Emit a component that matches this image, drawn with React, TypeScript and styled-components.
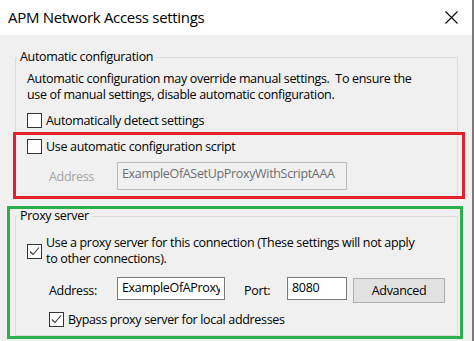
import React from 'react';
import styled, { createGlobalStyle } from 'styled-components';

const GlobalStyle = createGlobalStyle`
  html, body {
    margin: 0;
    padding: 0;
    background: #ffffff;
  }
  body {
    font-family: "Open Sans", "Noto Sans", Arial, sans-serif;
  }
`;

const Window = styled.div`
  width: 474px;
  height: 341px;
  box-sizing: border-box;
  border-right: 2px solid #7a7a7a;
  background: #f0f0f0;
  overflow: hidden;
  display: flex;
  flex-direction: column;
  font-size: 12.5px;
  letter-spacing: -0.33px;
  color: #000;
`;

const TitleBar = styled.div`
  height: 35px;
  flex: none;
  background: #ffffff;
  display: flex;
  align-items: center;
  justify-content: space-between;
  padding: 0 14px 0 8px;
`;

const Title = styled.span`
  font-size: 15px;
  letter-spacing: -0.3px;
  line-height: 20px;
  margin-top: -1px;
`;

const Body = styled.div`
  flex: 1;
  display: flex;
  flex-direction: column;
  padding-top: 14px;
`;

const Group = styled.fieldset<{ $padBottom?: number }>`
  margin: 0;
  padding: 0 0 ${p => p.$padBottom ?? 0}px 0;
  border: 1px solid #dcdcdc;
  min-width: 0;
`;

const AutoGroup = styled(Group)`
  margin: 0 14px 0 15px;
`;

const Legend = styled.legend<{ $lh: number }>`
  margin-left: 1px;
  padding: 0 3px;
  line-height: ${p => p.$lh}px;
`;

const GroupContent = styled.div<{ $top: number }>`
  padding: ${p => p.$top}px 0 0 11px;
`;

const Lines = styled.p`
  margin: 0;
  line-height: 16px;
  white-space: nowrap;
`;

const Highlight = styled.div<{ $color: string }>`
  border: 3px solid ${p => p.$color};
`;

const RedBox = styled(Highlight)`
  margin: 3px -8px -1px -3px;
  padding: 3px 0 6px 11px;
`;

const GreenBox = styled(Highlight)`
  margin: 7px 9px 0 7px;
  padding: 0 2px 0 5px;
`;

const CheckRow = styled.div<{ $top?: number; $indent?: number }>`
  display: flex;
  align-items: center;
  gap: 4px;
  line-height: 17px;
  white-space: nowrap;
  margin-top: ${p => p.$top ?? 0}px;
  padding-left: ${p => p.$indent ?? 0}px;
`;

const BoxFrame = styled.span`
  width: 13px;
  height: 13px;
  flex: none;
  border: 1px solid #333333;
  background: #ffffff;
  display: flex;
  align-items: center;
  justify-content: center;
`;

const FieldRow = styled.div<{ $top: number; $indent: number }>`
  display: flex;
  align-items: flex-start;
  margin-top: ${p => p.$top}px;
  padding-left: ${p => p.$indent}px;
`;

const FieldLabel = styled.span<{ $w: number; $disabled?: boolean; $left?: number }>`
  width: ${p => p.$w}px;
  flex: none;
  align-self: center;
  margin-left: ${p => p.$left ?? 0}px;
  color: ${p => (p.$disabled ? '#a3a3a3' : '#000')};
`;

const TextInput = styled.input<{ $w: number; $h: number; $disabled?: boolean }>`
  box-sizing: border-box;
  width: ${p => p.$w}px;
  height: ${p => p.$h}px;
  flex: none;
  margin: 0;
  padding: 0 4px ${p => (p.$disabled ? 5 : 2)}px 4px;
  border: 1px solid ${p => (p.$disabled ? '#b9b9b9' : '#7a7a7a')};
  background: ${p => (p.$disabled ? '#f0f0f0' : '#ffffff')};
  color: ${p => (p.$disabled ? '#6d6d6d' : '#000')};
  font: inherit;
  letter-spacing: inherit;
  outline: none;
`;

const Button = styled.button`
  box-sizing: border-box;
  width: 92px;
  height: 25px;
  margin: 1px 0 0 6px;
  padding: 0;
  border: 1px solid #adadad;
  background: #e1e1e1;
  color: #000;
  font: inherit;
  letter-spacing: inherit;
`;

const Check = ({ checked }: { checked?: boolean }) => (
  <BoxFrame>
    {checked && (
      <svg width="11" height="11" viewBox="0 0 11 11">
        <polyline points="1,5.5 4,8.5 10,1.5" fill="none" stroke="#333" strokeWidth="1.1" />
      </svg>
    )}
  </BoxFrame>
);

const CloseIcon = () => (
  <svg width="13" height="13" viewBox="0 0 13 13">
    <path d="M0.5 0.5 L12.5 12.5 M12.5 0.5 L0.5 12.5" stroke="#000" strokeWidth="1.1" />
  </svg>
);

export default function App() {
  return (
    <>
      <GlobalStyle />
      <Window>
        <TitleBar>
          <Title>APM Network Access settings</Title>
          <CloseIcon />
        </TitleBar>
        <Body>
          <AutoGroup>
            <Legend $lh={16}>Automatic configuration</Legend>
            <GroupContent $top={6}>
              <Lines>
                Automatic configuration may override manual settings.&nbsp; To ensure the
                <br />
                use of manual settings, disable automatic configuration.
              </Lines>
              <CheckRow $top={9}>
                <Check />
                <span>Automatically detect settings</span>
              </CheckRow>
            </GroupContent>
            <RedBox $color="#e4212b">
              <CheckRow>
                <Check />
                <span>Use automatic configuration script</span>
              </CheckRow>
              <FieldRow $top={7} $indent={22}>
                <FieldLabel $w={68} $disabled>Address</FieldLabel>
                <TextInput $w={230} $h={28} $disabled readOnly value="ExampleOfASetUpProxyWithScriptAAA" />
              </FieldRow>
            </RedBox>
          </AutoGroup>
          <GreenBox $color="#2bb04a">
            <Group $padBottom={7}>
              <Legend $lh={14}>Proxy server</Legend>
              <GroupContent $top={12}>
                <CheckRow>
                  <Check checked />
                  <Lines>
                    Use a proxy server for this connection (These settings will not apply
                    <br />
                    to other connections).
                  </Lines>
                </CheckRow>
                <FieldRow $top={10} $indent={22}>
                  <FieldLabel $w={68}>Address:</FieldLabel>
                  <TextInput $w={108} $h={23} readOnly value="ExampleOfAProxyServerAddress" />
                  <FieldLabel $w={43} $left={19}>Port:</FieldLabel>
                  <TextInput $w={60} $h={23} readOnly value="8080" />
                  <Button>Advanced</Button>
                </FieldRow>
                <CheckRow $top={8} $indent={22}>
                  <Check checked />
                  <span>Bypass proxy server for local addresses</span>
                </CheckRow>
              </GroupContent>
            </Group>
          </GreenBox>
        </Body>
      </Window>
    </>
  );
}
